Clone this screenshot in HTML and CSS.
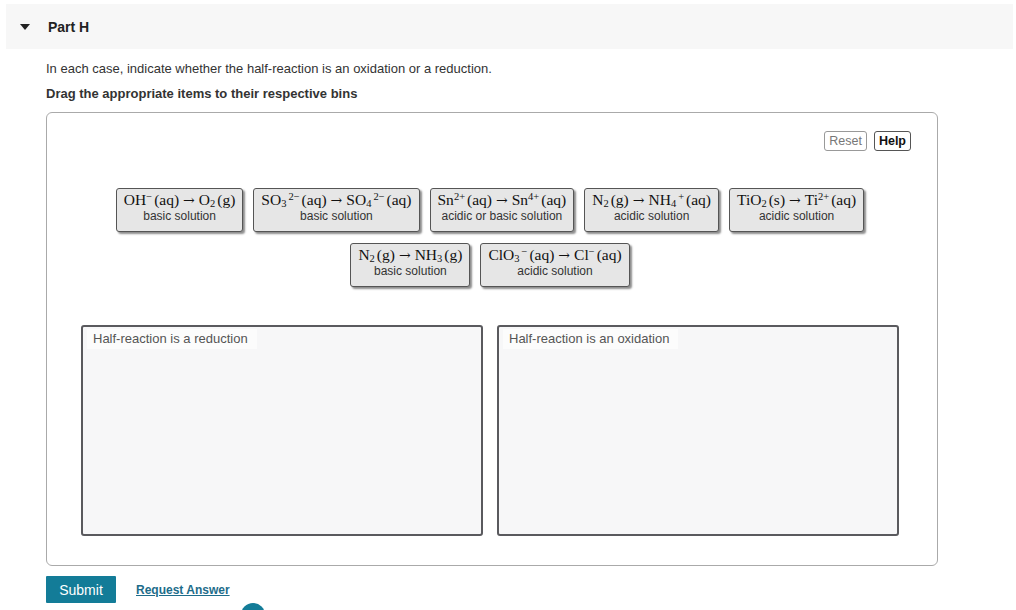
FILE: index.html
```html
<!DOCTYPE html>
<html lang="en">
<head>
    <meta charset="UTF-8">
    <title>Part H</title>
    <link rel="stylesheet" href="styles.css">
</head>
<body>
    <div class="part-header">
        <span class="caret"></span>
        <span class="part-title">Part H</span>
    </div>

    <div class="part-body">
        <p class="prompt">In each case, indicate whether the half-reaction is an oxidation or a reduction.</p>
        <p class="instructions">Drag the appropriate items to their respective bins</p>

        <div class="dnd">
            <div class="toolbar">
                <button class="tool-btn disabled">Reset</button>
                <button class="tool-btn">Help</button>
            </div>

            <div class="pool">
                <div class="chip-row">
                    <div class="chip">
                        <div class="chem">OH<sup>−</sup>(aq)<span class="arrow">→</span>O<sub>2</sub>(g)</div>
                        <div class="note">basic solution</div>
                    </div>
                    <div class="chip">
                        <div class="chem">SO<sub>3</sub><sup>2−</sup>(aq)<span class="arrow">→</span>SO<sub>4</sub><sup>2−</sup>(aq)</div>
                        <div class="note">basic solution</div>
                    </div>
                    <div class="chip">
                        <div class="chem">Sn<sup>2+</sup>(aq)<span class="arrow">→</span>Sn<sup>4+</sup>(aq)</div>
                        <div class="note">acidic or basic solution</div>
                    </div>
                    <div class="chip">
                        <div class="chem">N<sub>2</sub>(g)<span class="arrow">→</span>NH<sub>4</sub><sup>+</sup>(aq)</div>
                        <div class="note">acidic solution</div>
                    </div>
                    <div class="chip">
                        <div class="chem">TiO<sub>2</sub>(s)<span class="arrow">→</span>Ti<sup>2+</sup>(aq)</div>
                        <div class="note">acidic solution</div>
                    </div>
                </div>
                <div class="chip-row">
                    <div class="chip">
                        <div class="chem">N<sub>2</sub>(g)<span class="arrow">→</span>NH<sub>3</sub>(g)</div>
                        <div class="note">basic solution</div>
                    </div>
                    <div class="chip">
                        <div class="chem">ClO<sub>3</sub><sup>−</sup>(aq)<span class="arrow">→</span>Cl<sup>−</sup>(aq)</div>
                        <div class="note">acidic solution</div>
                    </div>
                </div>
            </div>

            <div class="bins">
                <div class="bin">
                    <span class="bin-label">Half-reaction is a reduction</span>
                </div>
                <div class="bin">
                    <span class="bin-label">Half-reaction is an oxidation</span>
                </div>
            </div>
        </div>

        <div class="actions">
            <button class="submit-btn">Submit</button>
            <a class="request-link" href="#">Request Answer</a>
        </div>
    </div>

    <!-- feedback badge peeking in at the bottom edge -->
    <span class="feedback-dot"></span>
</body>
</html>
```

FILE: styles.css
```css
* {
    margin: 0;
    padding: 0;
    box-sizing: border-box;
}

body {
    font-family: "Liberation Sans", Arial, sans-serif;
    color: #333;
    background: #fff;
    overflow: hidden;
}

.part-header {
    display: flex;
    align-items: center;
    height: 45px;
    margin: 4px 3px 0 6px;
    background: #f7f7f7;
}

.caret {
    width: 0;
    height: 0;
    margin-left: 14px;
    border-left: 5px solid transparent;
    border-right: 5px solid transparent;
    border-top: 6px solid #222;
}

.part-title {
    margin-left: 18px;
    font-size: 14px;
    font-weight: bold;
    color: #222;
}

.part-body {
    padding-left: 46px;
}

.prompt {
    margin-top: 12px;
    font-size: 13px;
    line-height: 16px;
    color: #333;
}

.instructions {
    margin-top: 9px;
    font-size: 13px;
    font-weight: bold;
    line-height: 16px;
    color: #333;
}

.dnd {
    width: 892px;
    height: 454px;
    margin-top: 10px;
    border: 1px solid #aaa;
    border-radius: 6px;
    padding: 18px 26px 0 34px;
}

.toolbar {
    display: flex;
    justify-content: flex-end;
    gap: 7px;
}

.tool-btn {
    font-family: inherit;
    font-size: 12.5px;
    line-height: 16px;
    padding: 0 4px;
    height: 20px;
    background: #fff;
    border: 1px solid #555;
    border-radius: 3px;
    color: #111;
    font-weight: bold;
}

.tool-btn.disabled {
    font-weight: normal;
    color: #777;
    border-color: #999;
}

.pool {
    display: flex;
    flex-direction: column;
    align-items: center;
    gap: 11px;
    width: 818px;
    margin-top: 37px;
}

.chip-row {
    display: flex;
    gap: 10px;
}

.chip {
    height: 44px;
    padding: 2px 7px 0;
    text-align: center;
    background: #e6e6e6;
    border: 1px solid #555;
    border-radius: 3px;
    box-shadow: 2px 2px 2px rgba(0, 0, 0, 0.45);
}

.chem {
    font-family: "Liberation Serif", "Times New Roman", serif;
    font-size: 15.5px;
    line-height: 18px;
    color: #111;
    white-space: nowrap;
}

.chem sub,
.chem sup {
    font-size: 10.5px;
    line-height: 0;
    margin-right: 2px;
}

.chem sub {
    vertical-align: -2px;
}

.chem sup {
    vertical-align: 5px;
}

.chem .arrow {
    font-family: "DejaVu Serif", serif;
    font-size: 14px;
    margin: 0 4px;
}

.note {
    margin-top: 1px;
    font-size: 12px;
    line-height: 13px;
    color: #333;
}

.bins {
    display: flex;
    gap: 14px;
    margin-top: 38px;
}

.bin {
    flex-shrink: 0;
    width: 402px;
    height: 211px;
    background: #f7f7f8;
    border: 2px solid #5a5a5e;
    border-radius: 3px;
    padding: 2px 4px;
}

.bin-label {
    display: inline-block;
    padding: 1px 9px 2px 6px;
    background: #fcfcfc;
    font-size: 13px;
    line-height: 17px;
    color: #555;
}

.actions {
    display: flex;
    align-items: center;
    gap: 20px;
    margin-top: 10px;
}

.submit-btn {
    width: 70px;
    height: 27px;
    font-family: inherit;
    font-size: 14px;
    color: #fff;
    background: #137c98;
    border: none;
    border-radius: 1px;
}

.request-link {
    font-size: 12px;
    font-weight: bold;
    color: #1d6c8a;
    text-decoration: underline;
}

.feedback-dot {
    position: absolute;
    left: 241px;
    top: 603px;
    width: 24px;
    height: 24px;
    border-radius: 50%;
    background: #137c98;
}
```
